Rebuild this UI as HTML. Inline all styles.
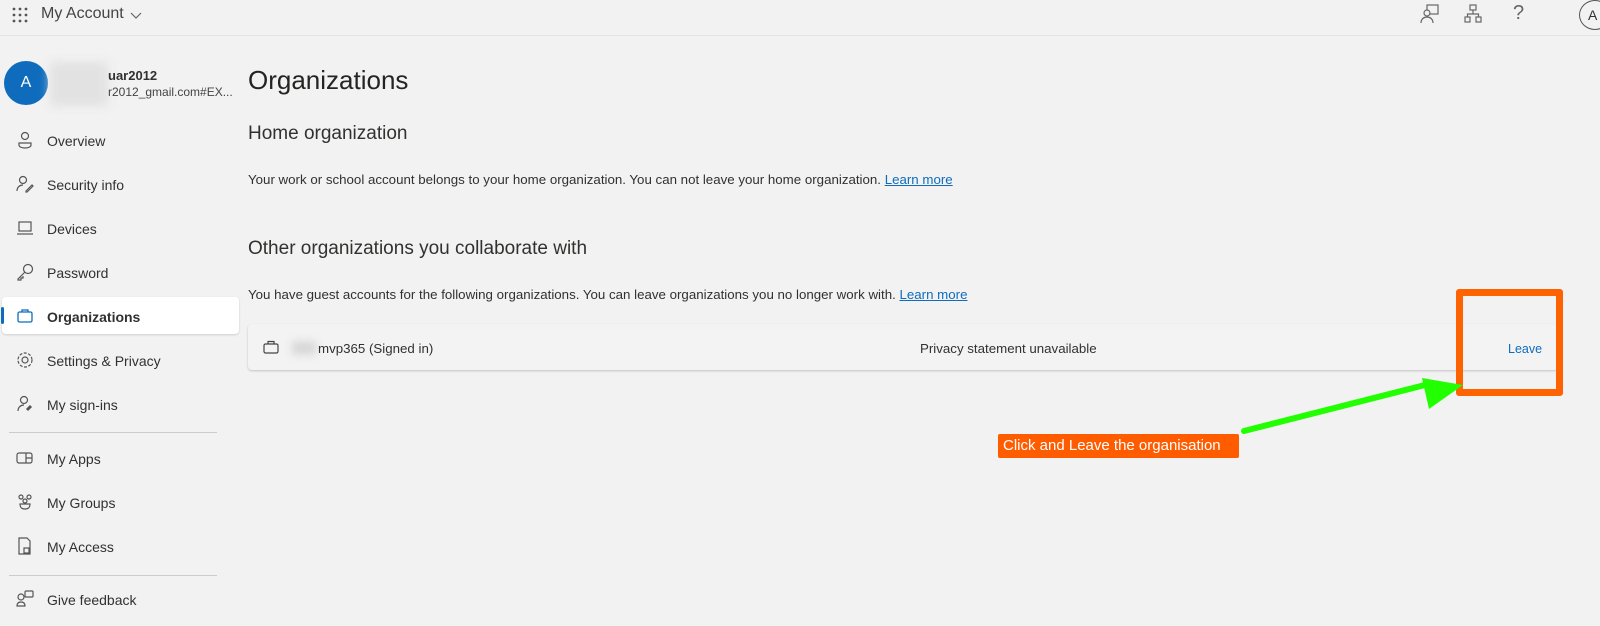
<!DOCTYPE html>
<html><head><meta charset="utf-8"><style>
*{margin:0;padding:0;box-sizing:border-box}
body{width:1600px;height:626px;background:#f2f2f2;font-family:"Liberation Sans",sans-serif;color:#323130;position:relative;overflow:hidden}
.abs{position:absolute}
.top{left:0;top:0;width:1600px;height:36px;border-bottom:1px solid #e4e4e4}
.nav{left:16px;font-size:14px;color:#323130}
.nav svg{position:absolute;left:0;top:-2px}
.nav span{position:absolute;left:31px;top:0;white-space:nowrap}
a{color:#0f6cbd;text-decoration:underline}
.t{font-size:13.3px;white-space:nowrap}
</style></head><body>
<div class="abs top"></div>
<svg class="abs" style="left:12px;top:7px" width="16" height="16" fill="#555"><g><circle cx="2" cy="2" r="1.4"/><circle cx="8" cy="2" r="1.4"/><circle cx="14" cy="2" r="1.4"/><circle cx="2" cy="8" r="1.4"/><circle cx="8" cy="8" r="1.4"/><circle cx="14" cy="8" r="1.4"/><circle cx="2" cy="14" r="1.4"/><circle cx="8" cy="14" r="1.4"/><circle cx="14" cy="14" r="1.4"/></g></svg>
<div class="abs" style="left:41px;top:5px;font-size:16px;color:#444">My Account</div>
<svg class="abs" style="left:129px;top:11px" width="14" height="10" fill="none" stroke="#666" stroke-width="1.2"><path d="M2 2l5 5 5-5"/></svg>
<svg class="abs" style="left:1420px;top:4px" width="20" height="20" fill="none" stroke="#666" stroke-width="1.2"><rect x="7" y="1" width="11" height="9"/><circle cx="7" cy="9" r="3" fill="#f2f2f2"/><path d="M1 19c0-4 3-6 6-6s6 2 6 6"/></svg>
<svg class="abs" style="left:1464px;top:4px" width="18" height="20" fill="none" stroke="#666" stroke-width="1.2"><rect x="6" y="1" width="6" height="5"/><rect x="1" y="13" width="5" height="5"/><rect x="12" y="13" width="5" height="5"/><path d="M9 6v4M3.5 13v-3h11v3"/></svg>
<div class="abs" style="left:1513px;top:2px;font-size:20px;color:#666">?</div>
<div class="abs" style="left:1579px;top:0;width:32px;height:30px;border:1px solid #555;border-radius:50%;font-size:14px;padding:6px 0 0 8px">A</div>

<div class="abs" style="left:4px;top:61px;width:44px;height:44px;border-radius:50%;background:#0f6cbd;color:#fff;font-size:16px;text-align:center;line-height:44px">A</div>
<div class="abs" style="left:50px;top:62px;width:58px;height:44px;background:#e2e2e2;filter:blur(5px)"></div>
<div class="abs" style="left:108px;top:68px;font-size:13px;font-weight:bold">uar2012</div>
<div class="abs" style="left:108px;top:85px;font-size:12px;color:#444">r2012_gmail.com#EX...</div>

<div class="abs nav" style="top:133px"><svg width="18" height="18" fill="none" stroke="#555" stroke-width="1.2"><circle cx="9" cy="5" r="3.5"/><path d="M3 12h12v2c0 2-3 3-6 3s-6-1-6-3z"/></svg><span>Overview</span></div>
<div class="abs nav" style="top:177px"><svg width="18" height="18" fill="none" stroke="#555" stroke-width="1.2"><circle cx="7" cy="5" r="3.5"/><path d="M1 16c0-4 3-6 6-6M10 16l6-6 1 1-6 6h-1z"/></svg><span>Security info</span></div>
<div class="abs nav" style="top:221px"><svg width="18" height="18" fill="none" stroke="#555" stroke-width="1.2"><rect x="3" y="3" width="12" height="9"/><path d="M1 15h16"/></svg><span>Devices</span></div>
<div class="abs nav" style="top:265px"><svg width="18" height="18" fill="none" stroke="#555" stroke-width="1.2"><circle cx="12" cy="6" r="4.5"/><path d="M9 9l-7 7v1h3v-2h2v-2"/></svg><span>Password</span></div>
<div class="abs" style="left:2px;top:297px;width:237px;height:37px;background:#fff;border-radius:4px;box-shadow:0 1px 2px rgba(0,0,0,.15)"></div>
<div class="abs" style="left:1px;top:307px;width:3px;height:17px;background:#0f6cbd;border-radius:2px"></div>
<div class="abs nav" style="top:309px;font-weight:bold"><svg width="18" height="18" fill="none" stroke="#0f6cbd" stroke-width="1.3"><rect x="2" y="5" width="14" height="10" rx="1.5"/><path d="M6 5V3h6v2"/></svg><span>Organizations</span></div>
<div class="abs nav" style="top:353px"><svg width="18" height="18" fill="none" stroke="#555" stroke-width="1.2"><circle cx="9" cy="9" r="3"/><circle cx="9" cy="9" r="7" stroke-dasharray="3 1.5"/></svg><span>Settings &amp; Privacy</span></div>
<div class="abs nav" style="top:397px"><svg width="18" height="18" fill="none" stroke="#555" stroke-width="1.2"><circle cx="8" cy="5" r="3.5"/><path d="M2 16c0-4 3-6 6-6"/><path d="M11 15l4-4" stroke-width="3"/></svg><span>My sign-ins</span></div>
<div class="abs" style="left:9px;top:432px;width:208px;height:1px;background:#ccc"></div>
<div class="abs nav" style="top:451px"><svg width="18" height="18" fill="none" stroke="#555" stroke-width="1.2"><rect x="1" y="4" width="15" height="10" rx="2"/><path d="M10 4v10M10 9h6"/></svg><span>My Apps</span></div>
<div class="abs nav" style="top:495px"><svg width="18" height="18" fill="none" stroke="#555" stroke-width="1.2"><circle cx="5" cy="4" r="2"/><circle cx="13" cy="4" r="2"/><circle cx="9" cy="8" r="2"/><path d="M4 11h10c0 4-2 5-5 5s-5-1-5-5z"/></svg><span>My Groups</span></div>
<div class="abs nav" style="top:539px"><svg width="18" height="18" fill="none" stroke="#555" stroke-width="1.2"><path d="M3 1h8l3 3v13H3z"/><rect x="8" y="11" width="5" height="5"/></svg><span>My Access</span></div>
<div class="abs" style="left:9px;top:575px;width:208px;height:1px;background:#ccc"></div>
<div class="abs nav" style="top:592px"><svg width="18" height="18" fill="none" stroke="#555" stroke-width="1.2"><circle cx="5" cy="7" r="3"/><rect x="9" y="1" width="8" height="6" rx="1"/><path d="M1 16c0-3 2-4 4-4s4 1 4 4z"/></svg><span>Give feedback</span></div>

<div class="abs" style="left:248px;top:65px;font-size:26px;color:#252423">Organizations</div>
<div class="abs" style="left:248px;top:123px;font-size:19px">Home organization</div>
<div class="abs t" style="left:248px;top:172px">Your work or school account belongs to your home organization. You can not leave your home organization. <a>Learn more</a></div>
<div class="abs" style="left:248px;top:238px;font-size:19px">Other organizations you collaborate with</div>
<div class="abs t" style="left:248px;top:287px">You have guest accounts for the following organizations. You can leave organizations you no longer work with. <a>Learn more</a></div>
<div class="abs" style="left:248px;top:324px;width:1310px;height:46px;background:#f3f3f3;border-radius:4px;box-shadow:0 1px 2px rgba(0,0,0,.2)"></div>
<svg class="abs" style="left:263px;top:340px" width="16" height="14" fill="none" stroke="#444" stroke-width="1.2"><rect x="1" y="4" width="14" height="9" rx="1.5"/><path d="M5 4V1.5h6V4"/></svg>
<div class="abs" style="left:292px;top:341px;width:24px;height:14px;background:#d8d8d8;filter:blur(4px)"></div>
<div class="abs t" style="left:318px;top:341px">mvp365 (Signed in)</div>
<div class="abs t" style="left:920px;top:341px">Privacy statement unavailable</div>
<div class="abs" style="left:1508px;top:342px;font-size:12.5px;color:#0f6cbd">Leave</div>

<div class="abs" style="left:1456px;top:289px;width:107px;height:107px;border:7px solid #ff6200;border-radius:3px"></div>
<svg class="abs" style="left:0;top:0" width="1600" height="626"><path d="M1244 431L1425 385" stroke="#22ff00" stroke-width="6" stroke-linecap="round"/><path d="M1422 378L1463 385L1429 409Z" fill="#22ff00"/></svg>
<div class="abs" style="left:998px;top:434px;width:241px;height:24px;background:#ff5c00;color:#fff;font-size:15px;line-height:24px;padding-left:5px;border-radius:2px">Click and Leave the organisation</div>
</body></html>
